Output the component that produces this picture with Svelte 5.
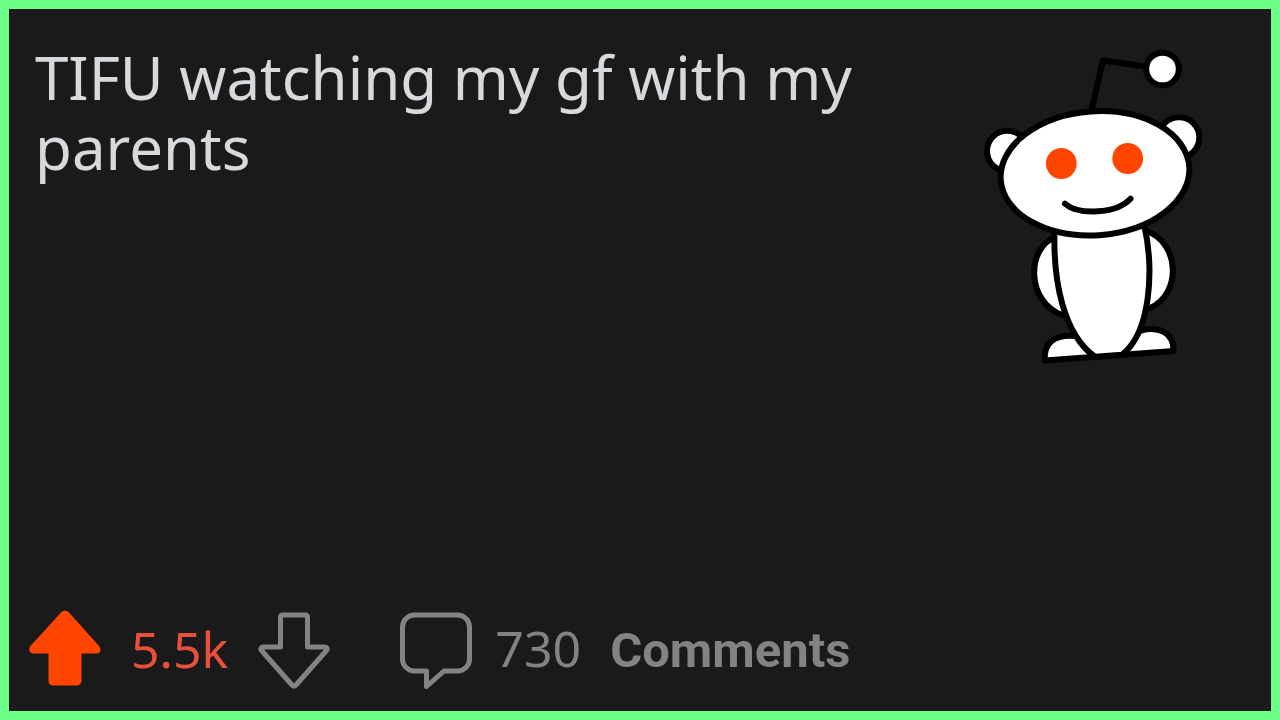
<script lang="ts">
  const post = {
    title: 'TIFU watching my gf with my parents',
    score: '5.5k',
    comments: 730,
  };
</script>

<main class="card">
  <header class="top">
    <h1 class="title">{post.title}</h1>
    <svg class="mascot" viewBox="0 0 230 330" aria-hidden="true">
      <g fill="#fff" stroke="#000" stroke-width="6" stroke-linecap="round" stroke-linejoin="round">
        <!-- arms -->
        <path d="M76 197C46 207 46 262 82 275L100 270V200Z" />
        <path d="M166 191C200 202 202 254 170 268L150 265V195Z" />
        <!-- feet -->
        <path d="M65 320.5C63 303 75 294 95 296L161 290.5C178 286 194 292 193.5 311Z" />
        <!-- body -->
        <path d="M74.5 190C73 240 83 294 115 316.8L142 314.8C171 292 174 230 164.5 186Z" />
        <!-- ears -->
        <circle cx="27.3" cy="111" r="20.3" />
        <circle cx="199" cy="97.5" r="20.3" />
        <!-- antenna -->
        <path fill="none" d="M111.5 70L123 20.5L166 26.5" />
        <circle cx="182.5" cy="29" r="16.3" />
        <!-- head -->
        <ellipse cx="115" cy="133.3" rx="94.5" ry="62" transform="rotate(-4 115 133.3)" />
        <path fill="none" d="M85 163.7C99 175.5 136 174 150.5 158.7" />
      </g>
      <circle cx="81.3" cy="123.5" r="15.4" fill="#ff4500" />
      <circle cx="147.7" cy="118.5" r="15.4" fill="#ff4500" />
    </svg>
  </header>

  <footer class="bar">
    <div class="votes">
      <button class="icon" aria-label="Upvote">
        <svg viewBox="0 0 72 80" aria-hidden="true">
          <path
            d="M32.5 3Q36 0 39.5 3L70.5 37.5Q73.5 44 67.5 44.5H52.5V71.5Q52 76.5 47.5 76.5H24.5Q19.5 76.5 19.5 71.5V44.5H4.5Q-1.5 44 1 37.5Z"
            fill="#ff4500"
          />
        </svg>
      </button>
      <span class="score">{post.score}</span>
      <button class="icon" aria-label="Downvote">
        <svg viewBox="0 0 72 80" aria-hidden="true">
          <path
            d="M25 6H47Q49.5 6 49.5 8.5V38H66.5Q70.5 38.5 68.5 41.5L38 76Q36 78 34 76L3.5 41.5Q1.5 38.5 5.5 38H22.5V8.5Q22.5 6 25 6Z"
            fill="none"
            stroke="#818384"
            stroke-width="5"
            stroke-linejoin="round"
          />
        </svg>
      </button>
    </div>
    <a class="comments" href="#comments">
      <svg viewBox="0 0 72 80" aria-hidden="true">
        <path
          d="M14.5 6H57.5A12 12 0 0 1 69.5 18V50A12 12 0 0 1 57.5 62H44L26.5 77.5V62H14.5A12 12 0 0 1 2.5 50V18A12 12 0 0 1 14.5 6Z"
          fill="none"
          stroke="#818384"
          stroke-width="5"
          stroke-linejoin="round"
        />
      </svg>
      <span class="count">
        <span>{post.comments}</span>
        <strong>Comments</strong>
      </span>
    </a>
  </footer>
</main>

<style>
  :global(body) {
    margin: 0;
    background: #1a1a1b;
  }

  .card {
    box-sizing: border-box;
    min-height: 100vh;
    display: flex;
    flex-direction: column;
    justify-content: space-between;
    padding: 31px 61px 22px 20px;
    border: 9px solid #6dff87;
    background: #1a1a1b;
    font-family: 'Noto Sans', sans-serif;
  }

  .top {
    display: flex;
    align-items: flex-start;
    justify-content: space-between;
    gap: 80px;
  }

  .title {
    margin: 2px 0 0 6px;
    max-width: 860px;
    color: #d7dadc;
    font-size: 60px;
    font-weight: 400;
    line-height: 70px;
  }

  .mascot {
    flex: none;
    width: 230px;
    height: 330px;
  }

  .bar,
  .votes,
  .comments {
    display: flex;
    align-items: center;
  }

  .bar {
    gap: 70px;
    font-size: 50px;
    line-height: 80px;
  }

  .votes {
    gap: 30px;
  }

  .icon {
    display: block;
    padding: 0;
    border: 0;
    background: none;
    cursor: pointer;
  }

  .bar svg {
    display: block;
    width: 72px;
    height: 80px;
  }

  .score {
    color: #e9503a;
  }

  .comments {
    gap: 23px;
    height: 80px;
    color: #818384;
    text-decoration: none;
  }

  .count {
    display: flex;
    align-items: baseline;
    gap: 29px;
  }

  .count strong {
    font-family: Roboto, sans-serif;
    font-size: 49px;
    font-weight: 700;
  }
</style>
